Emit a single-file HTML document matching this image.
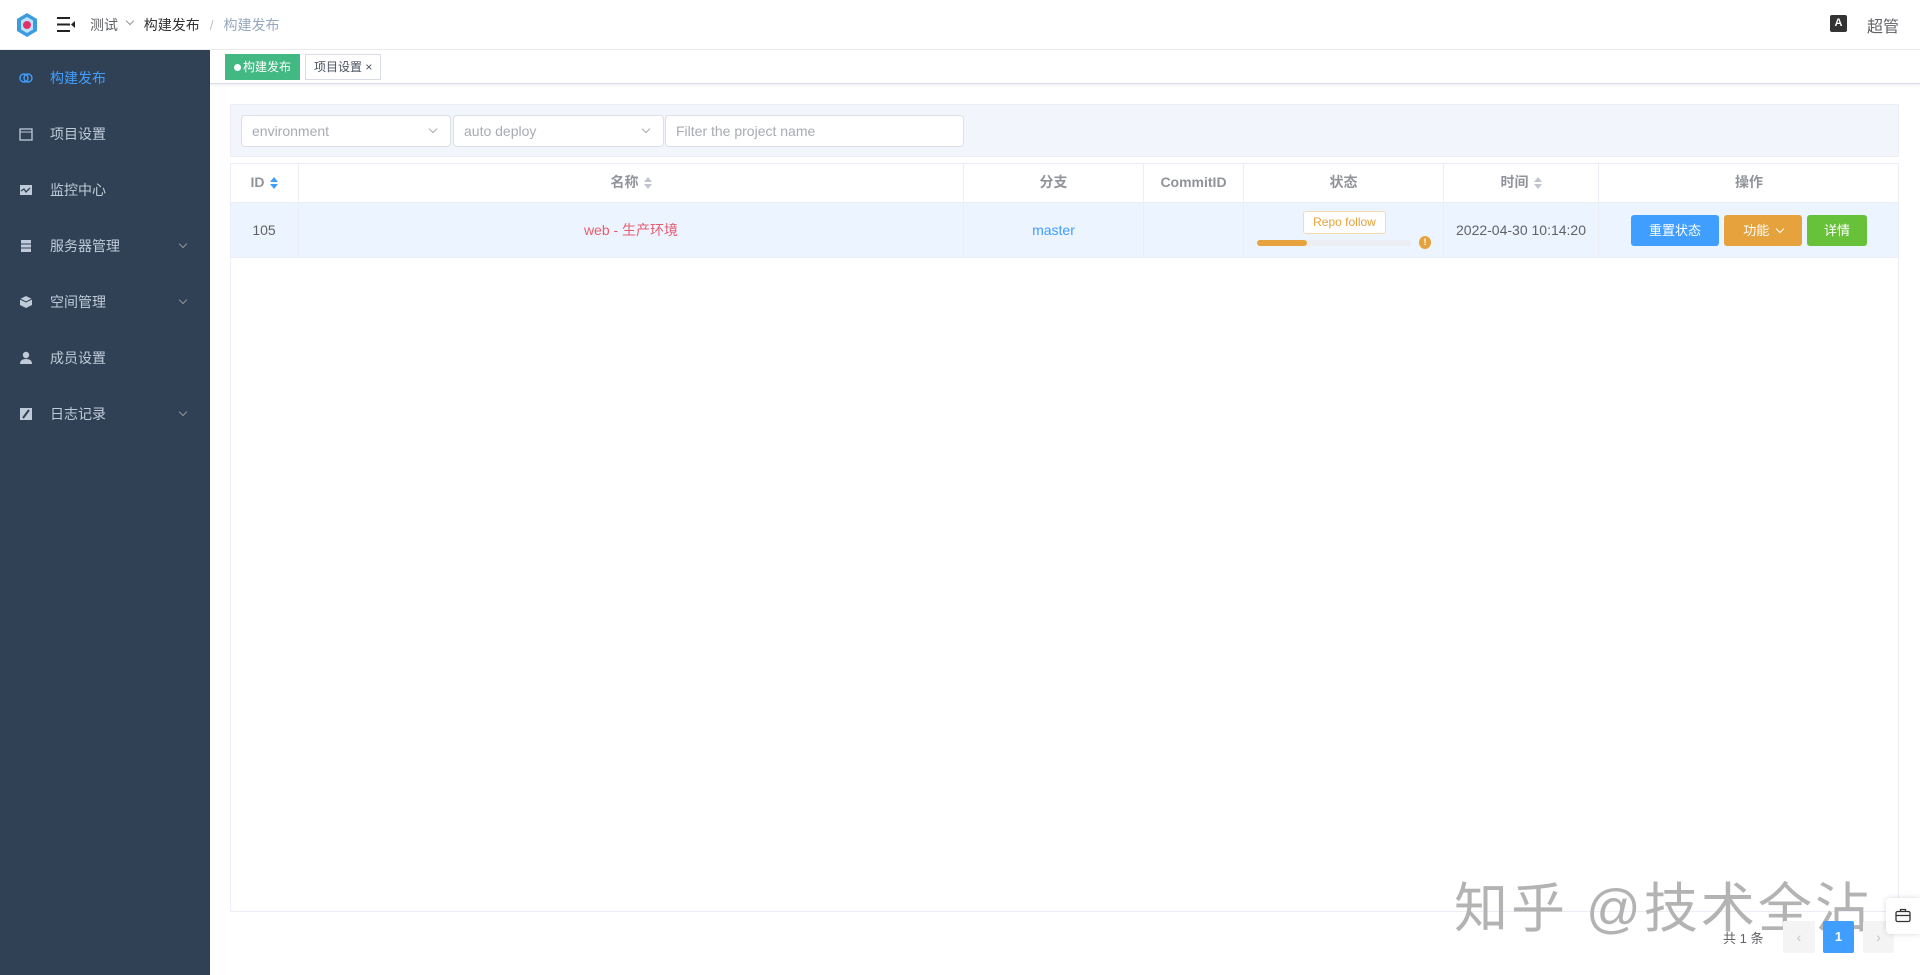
<!DOCTYPE html>
<html><head><meta charset="utf-8"><style>
*{box-sizing:border-box;margin:0;padding:0}
body{width:1920px;height:975px;overflow:hidden;background:#fff;font-family:"Liberation Sans","Noto Sans CJK SC",sans-serif;font-size:14px;color:#606266;position:relative}
.abs{position:absolute}
.hdr{left:0;top:0;width:1920px;height:50px;background:#fff;border-bottom:1px solid #eee}
.side{left:0;top:50px;width:210px;height:925px;background:#304156}
.mi{position:absolute;left:0;width:210px;height:56px;line-height:56px;color:#bfcbd9;font-size:14px;padding-left:50px}
.mi .ic{position:absolute;left:19px;top:21px;width:14px;height:14px}
.chev{position:absolute;width:6px;height:6px;border-right:1px solid #909399;border-bottom:1px solid #909399;transform:rotate(45deg)}
.mi .chev{right:24px;top:23px}
.tags{left:210px;top:50px;width:1710px;height:34px;border-bottom:1px solid #d8dce5;box-shadow:0 1px 3px rgba(0,0,0,.08)}
.tag{position:absolute;top:4px;height:26px;line-height:24px;font-size:12px;padding:0 8px;border:1px solid #d8dce5}
.sel{position:absolute;top:115px;height:32px;border:1px solid #dcdfe6;border-radius:4px;background:#fff;color:#a8abb2;line-height:30px;padding-left:10px;font-size:14px}
.sel .chev{right:14px;top:10px;border-color:#a8abb2}
.th{position:absolute;top:163px;height:39px;line-height:39px;text-align:center;font-weight:bold;color:#909399;font-size:14px;border-right:1px solid #ebeef5}
.td{position:absolute;top:202px;height:56px;line-height:56px;text-align:center;font-size:14px;border-right:1px solid #ebeef5}
.btn{position:absolute;top:215px;height:31px;line-height:31px;color:#fff;text-align:center;border-radius:3px;font-size:13px}
.sort{display:inline-block;vertical-align:middle;margin-left:5px;width:8px;height:14px;position:relative}
.sort:before{content:"";position:absolute;left:0;top:1px;border:4px solid transparent;border-bottom:5px solid #c0c4cc;border-top:0}
.sort:after{content:"";position:absolute;left:0;top:8px;border:4px solid transparent;border-top:5px solid #c0c4cc;border-bottom:0}
.sort.on:before{border-bottom-color:#409eff}.sort.on:after{border-top-color:#409eff}
</style></head><body>
<div class="abs hdr">
 <svg class="abs" style="left:15px;top:12px" width="24" height="26" viewBox="0 0 24 26"><polygon points="12,1 22,7 22,19 12,25 2,19 2,7" fill="#3d9be0"/><polygon points="12,5 18,8.5 18,17.5 12,21 6,17.5 6,8.5" fill="#bfe3ff"/><circle cx="12" cy="13" r="4" fill="#e0316a"/></svg>
 <svg class="abs" style="left:57px;top:17px" width="18" height="15" viewBox="0 0 18 15"><rect x="0" y="0" width="13" height="2" fill="#222"/><rect x="0" y="6.5" width="13" height="2" fill="#222"/><rect x="0" y="13" width="13" height="2" fill="#222"/><polygon points="18,4 14,7.5 18,11" fill="#222"/></svg>
 <div class="abs" style="left:90px;top:15px;font-size:14px;color:#606266">测试 <span style="display:inline-block;width:18px;position:relative;height:10px"><span class="chev" style="left:5px;top:-2px"></span></span> <span style="color:#303133">构建发布</span> <span style="color:#c0c4cc;margin:0 6px">/</span> <span style="color:#97a8be">构建发布</span></div>
 <div class="abs" style="left:1830px;top:15px;width:17px;height:17px;background:#333;border-radius:2px;color:#fff;font-size:11px;line-height:17px;text-align:center;font-weight:bold">A</div>
 <div class="abs" style="left:1867px;top:13px;font-size:16px;color:#606266">超管</div>
</div>
<div class="abs side">
 <div class="mi" style="top:0;color:#409eff"><svg class="ic" viewBox="0 0 14 14"><circle cx="5" cy="7" r="4" fill="none" stroke="#409eff" stroke-width="1.4"/><circle cx="9" cy="7" r="4" fill="none" stroke="#409eff" stroke-width="1.4"/></svg>构建发布</div>
 <div class="mi" style="top:56px"><svg class="ic" viewBox="0 0 14 14"><rect x="1" y="2" width="12" height="11" fill="none" stroke="#bfcbd9" stroke-width="1.3"/><line x1="1" y1="5" x2="13" y2="5" stroke="#bfcbd9"/></svg>项目设置</div>
 <div class="mi" style="top:112px"><svg class="ic" viewBox="0 0 14 14"><rect x="1" y="2" width="12" height="10" fill="#bfcbd9"/><polyline points="2,8 5,6 7,9 11,5" fill="none" stroke="#304156" stroke-width="1.3"/></svg>监控中心</div>
 <div class="mi" style="top:168px"><svg class="ic" viewBox="0 0 14 14"><rect x="2" y="1" width="10" height="12" fill="#bfcbd9"/><line x1="2" y1="5" x2="12" y2="5" stroke="#304156"/><line x1="2" y1="9" x2="12" y2="9" stroke="#304156"/></svg>服务器管理<span class="chev"></span></div>
 <div class="mi" style="top:224px"><svg class="ic" viewBox="0 0 14 14"><polygon points="7,1 13,4 13,10 7,13 1,10 1,4" fill="#bfcbd9"/><polyline points="1,4 7,7 13,4 M7,7 7,13" fill="none" stroke="#304156"/></svg>空间管理<span class="chev"></span></div>
 <div class="mi" style="top:280px"><svg class="ic" viewBox="0 0 14 14"><circle cx="7" cy="4" r="3.2" fill="#bfcbd9"/><path d="M1,13 Q1,8 7,8 Q13,8 13,13Z" fill="#bfcbd9"/></svg>成员设置</div>
 <div class="mi" style="top:336px"><svg class="ic" viewBox="0 0 14 14"><rect x="1" y="1" width="12" height="12" fill="#bfcbd9"/><line x1="4" y1="11" x2="10" y2="3" stroke="#304156" stroke-width="2"/></svg>日志记录<span class="chev"></span></div>
</div>
<div class="abs tags">
 <div class="tag" style="left:15px;background:#42b983;border-color:#42b983;color:#fff"><span style="display:inline-block;width:7px;height:7px;border-radius:50%;background:#fff;margin-right:2px"></span>构建发布</div>
 <div class="tag" style="left:95px;color:#495060;background:#fff">项目设置 ×</div>
</div>
<div class="abs" style="left:230px;top:104px;width:1669px;height:53px;background:#f2f6fc;border:1px solid #ebeef5"></div>
<div class="sel" style="left:241px;width:210px">environment<span class="chev"></span></div>
<div class="sel" style="left:453px;width:211px">auto deploy<span class="chev"></span></div>
<div class="sel" style="left:665px;width:299px">Filter the project name</div>
<div class="abs" style="left:230px;top:163px;width:1669px;height:749px;border:1px solid #ebeef5"></div>
<div class="abs" style="left:231px;top:202px;width:1667px;height:56px;background:#ecf5ff;border-top:1px solid #ebeef5;border-bottom:1px solid #ebeef5"></div>
<div class="th" style="left:230px;width:69px">ID<span class="sort on"></span></div>
<div class="th" style="left:299px;width:665px">名称<span class="sort"></span></div>
<div class="th" style="left:964px;width:180px">分支</div>
<div class="th" style="left:1144px;width:100px">CommitID</div>
<div class="th" style="left:1244px;width:200px">状态</div>
<div class="th" style="left:1444px;width:155px">时间<span class="sort"></span></div>
<div class="th" style="left:1599px;width:300px;border:0">操作</div>
<div class="td" style="left:230px;width:69px">105</div>
<div class="td" style="left:299px;width:665px;color:#e65d6e">web - 生产环境</div>
<div class="td" style="left:964px;width:180px;color:#409eff">master</div>
<div class="td" style="left:1144px;width:100px"></div>
<div class="td" style="left:1244px;width:200px"></div>
<div class="td" style="left:1444px;width:155px;color:#606266">2022-04-30 10:14:20</div>
<div class="abs" style="left:1303px;top:211px;width:83px;height:23px;border:1px solid #f5dab1;border-radius:3px;background:#fff;color:#e6a23c;font-size:12px;line-height:21px;text-align:center">Repo follow</div>
<div class="abs" style="left:1257px;top:240px;width:155px;height:6px;background:#ebeef5;border-radius:3px"><div style="width:50px;height:6px;background:#e6a23c;border-radius:3px"></div></div>
<div class="abs" style="left:1419px;top:236px;width:12px;height:13px;border-radius:50%;background:#e6a23c;color:#fff;font-size:9px;line-height:13px;text-align:center;font-weight:bold">!</div>
<div class="btn" style="left:1631px;width:88px;background:#409eff">重置状态</div>
<div class="btn" style="left:1724px;width:78px;background:#e6a23c">功能 <span style="display:inline-block;width:6px;height:6px;border-right:1px solid #fff;border-bottom:1px solid #fff;transform:rotate(45deg);vertical-align:3px;margin-left:4px"></span></div>
<div class="btn" style="left:1807px;width:60px;background:#67c23a">详情</div>
<div class="abs" style="left:1454px;top:864px;font-size:54px;color:#b3b3b3;letter-spacing:3px;white-space:nowrap">知乎 @技术全沾</div>
<div class="abs" style="left:1723px;top:928px;font-size:13px;color:#606266">共 1 条</div>
<div class="abs" style="left:1783px;top:921px;width:32px;height:32px;background:#f4f4f5;color:#c0c4cc;text-align:center;line-height:32px;border-radius:2px">‹</div>
<div class="abs" style="left:1823px;top:921px;width:31px;height:32px;background:#409eff;color:#fff;text-align:center;line-height:32px;border-radius:2px;font-weight:bold;font-size:13px">1</div>
<div class="abs" style="left:1863px;top:921px;width:31px;height:32px;background:#f4f4f5;color:#c0c4cc;text-align:center;line-height:32px;border-radius:2px">›</div>
<div class="abs" style="left:1886px;top:898px;width:34px;height:36px;background:#fff;box-shadow:0 0 6px rgba(0,0,0,.15);border-radius:4px 0 0 4px">
 <svg style="position:absolute;left:9px;top:10px" width="16" height="15" viewBox="0 0 16 15"><rect x="1" y="3.5" width="14" height="10" rx="1.5" fill="none" stroke="#333" stroke-width="1.3"/><path d="M5.5,3.5V1.5H10.5V3.5M1,7.5H15" fill="none" stroke="#333" stroke-width="1.3"/></svg>
</div>
</body></html>
